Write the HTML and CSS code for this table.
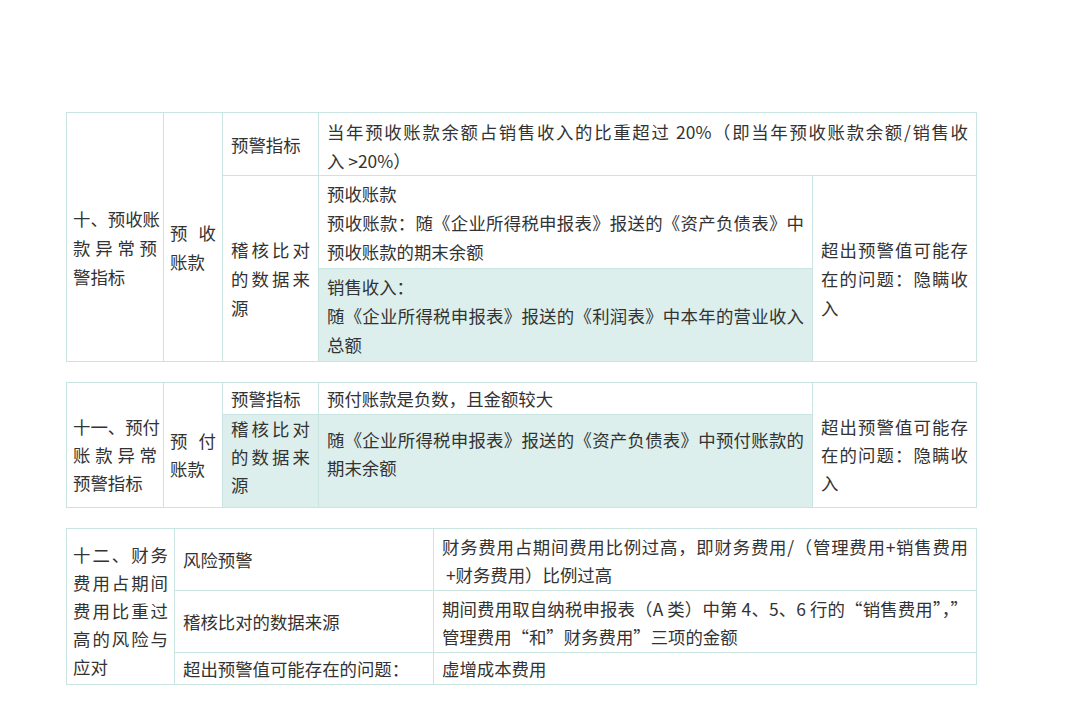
FILE: index.html
```html
<!DOCTYPE html>
<html lang="zh-CN">
<head>
<meta charset="utf-8">
<title>预警指标</title>
<link rel="stylesheet" href="styles.css">
</head>
<body>
<main class="page">
  <table class="tbl t1">
    <colgroup><col class="c-a"><col class="c-b"><col class="c-c"><col class="c-d"><col class="c-e"></colgroup>
    <tr class="h63">
      <td rowspan="3" class="c1 low"><span class="jl">十、预收账</span><span class="jl">款异常预</span>警指标</td>
      <td rowspan="3" class="c2 low"><span class="jl">预收</span>账款</td>
      <td>预警指标</td>
      <td colspan="2" class="low4"><span class="jl">当年预收账款余额占销售收入的比重超过 20%（即当年预收账款余额/销售收</span>入 &gt;20%）</td>
    </tr>
    <tr class="h93">
      <td rowspan="2" class="low"><span class="jl">稽核比对</span><span class="jl">的数据来</span>源</td>
      <td><span class="ln">预收账款</span><span class="jl">预收账款：随《企业所得税申报表》报送的《资产负债表》中</span>预收账款的期末余额</td>
      <td rowspan="2" class="low"><span class="jl">超出预警值可能存</span><span class="jl">在的问题：隐瞒收</span>入</td>
    </tr>
    <tr class="h93">
      <td class="fill"><span class="ln">销售收入：</span><span class="jl">随《企业所得税申报表》报送的《利润表》中本年的营业收入</span>总额</td>
    </tr>
  </table>

  <table class="tbl t2">
    <colgroup><col class="c-a"><col class="c-b"><col class="c-c"><col class="c-d"><col class="c-e"></colgroup>
    <tr class="h31">
      <td rowspan="2" class="c1 low"><span class="jl">十一、预付</span><span class="jl">账款异常</span>预警指标</td>
      <td rowspan="2" class="c2 low"><span class="jl">预付</span>账款</td>
      <td>预警指标</td>
      <td>预付账款是负数，且金额较大</td>
      <td rowspan="2" class="low"><span class="jl">超出预警值可能存</span><span class="jl">在的问题：隐瞒收</span>入</td>
    </tr>
    <tr class="h93">
      <td class="fill t2src"><span class="jl">稽核比对</span><span class="jl">的数据来</span>源</td>
      <td class="fill up"><span class="jl">随《企业所得税申报表》报送的《资产负债表》中预付账款的</span>期末余额</td>
    </tr>
  </table>

  <table class="tbl t3">
    <colgroup><col class="c-f"><col class="c-g"><col class="c-h"></colgroup>
    <tr class="h62">
      <td rowspan="3" class="c1 low3"><span class="jl">十二、财务</span><span class="jl">费用占期间</span><span class="jl">费用比重过</span><span class="jl">高的风险与</span>应对</td>
      <td>风险预警</td>
      <td class="low4"><span class="jl">财务费用占期间费用比例过高，即财务费用/（管理费用+销售费用</span>&nbsp;+财务费用）比例过高</td>
    </tr>
    <tr class="h62">
      <td>稽核比对的数据来源</td>
      <td class="low4"><span class="jl">期间费用取自纳税申报表（A 类）中第 4、5、6 行的“销售费用”，”</span>管理费用“和”财务费用”三项的金额</td>
    </tr>
    <tr class="h30">
      <td>超出预警值可能存在的问题：</td>
      <td>虚增成本费用</td>
    </tr>
  </table>
</main>
</body>
</html>
```

FILE: styles.css
```css
html, body {
  margin: 0;
  padding: 0;
  background: #ffffff;
}

.page {
  padding: 112px 0 0 66px;
  display: flex;
  flex-direction: column;
  gap: 20px;
  font-family: "Noto Sans CJK SC", "Noto Sans", sans-serif;
  font-size: 17.4px;
  color: #333333;
}

.tbl {
  border-collapse: collapse;
  table-layout: fixed;
  width: 910px;
}

.tbl td {
  border: 1px solid #c9e4e1;
  padding: 2px 8px 1px 8px;
  line-height: 29px;
  vertical-align: middle;
  text-align: left;
}

.t2 td { line-height: 28px; }
.t3 td { line-height: 28px; }

.c-a { width: 97px; }
.c-b { width: 59px; }
.c-c { width: 96px; }
.c-d { width: 494px; }
.c-e { width: 164px; }

.c-f { width: 108px; }
.c-g { width: 259px; }
.c-h { width: 543px; }

.tbl td.c1 { padding-left: 6px; padding-right: 6px; }
.tbl td.c2 { padding-left: 6px; padding-right: 6px; }

.h30 { height: 30px; }
.h31 { height: 31px; }
.h62 { height: 62px; }
.h63 { height: 63px; }
.h93 { height: 93px; }
.h94 { height: 94px; }

.fill { background: #dcefed; }

.jl {
  display: block;
  text-align: justify;
  text-align-last: justify;
  white-space: nowrap;
}

.ln { display: block; }

.tbl td.low { padding-top: 20px; padding-bottom: 0; }
.tbl td.low3 { padding-top: 8px; padding-bottom: 0; }
.tbl td.low4 { padding-top: 4px; padding-bottom: 0; }
.t3 td.low4 { padding-top: 3px; }
.tbl td.t2src { padding-top: 0; padding-bottom: 8px; }
.tbl td.up { padding-top: 0; padding-bottom: 14px; }
```
